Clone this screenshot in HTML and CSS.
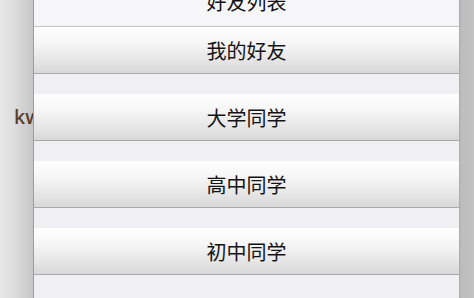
FILE: index.html
```html
<!DOCTYPE html>
<html lang="zh">
<head>
<meta charset="utf-8">
<title>好友列表</title>
<link rel="stylesheet" href="styles.css">
</head>
<body>
<div class="screen">
  <aside class="side">
    <div class="side-label">kwang</div>
  </aside>
  <main class="list">
    <header class="list-head"><span class="list-title">好友列表</span></header>
    <div class="group">我的好友</div>
    <div class="gap"></div>
    <div class="group">大学同学</div>
    <div class="gap"></div>
    <div class="group">高中同学</div>
    <div class="gap"></div>
    <div class="group">初中同学</div>
    <div class="gap rest"></div>
  </main>
  <div class="edge"></div>
</div>
</body>
</html>
```

FILE: styles.css
```css
html, body {
  margin: 0;
  padding: 0;
  height: 100%;
  overflow: hidden;
}
body {
  font-family: "Noto Sans CJK SC", "Noto Sans", sans-serif;
  background: #efeff4;
}
.screen {
  display: flex;
  width: 474px;
  height: 298px;
  overflow: hidden;
}
.side {
  width: 33px;
  flex: 0 0 33px;
  background: linear-gradient(to right, #e8e8e8 0%, #dedede 40%, #c6c6c6 100%);
  overflow: hidden;
  padding-top: 103px;
  box-sizing: border-box;
}
.side-label {
  padding-left: 14px;
  white-space: nowrap;
  font-family: "Noto Sans", "DejaVu Sans", sans-serif;
  font-weight: 500;
  font-size: 20px;
  line-height: 28px;
  color: #5a3a28;
}
.list {
  flex: 0 0 425px;
  width: 425px;
  border-left: 1px solid #9c9c9c;
  display: flex;
  flex-direction: column;
  background: #efeff4;
}
.list-head {
  height: 26px;
  flex: 0 0 26px;
  background: #f6f6f8;
  border-bottom: 1px solid #c4c4c6;
  display: flex;
  justify-content: center;
  align-items: flex-start;
  overflow: hidden;
}
.list-title {
  margin-top: -10px;
  font-size: 20px;
  line-height: 24px;
  color: #111;
}
.group {
  height: 46px;
  flex: 0 0 46px;
  border-bottom: 1px solid #a9a9ab;
  background: linear-gradient(to bottom, #ffffff 0%, #f6f6f6 35%, #e2e2e2 80%, #d8d8d8 100%);
  display: flex;
  align-items: center;
  justify-content: center;
  font-size: 20px;
  color: #141414;
}
.gap {
  height: 20px;
  flex: 0 0 20px;
  background: #efeff4;
}
.rest {
  flex: 1 1 auto;
}
.edge {
  flex: 1 1 auto;
  background: linear-gradient(to right, #a9a9a9 0px, #bdbdbd 2px, #c2c2c2 100%);
}
```
